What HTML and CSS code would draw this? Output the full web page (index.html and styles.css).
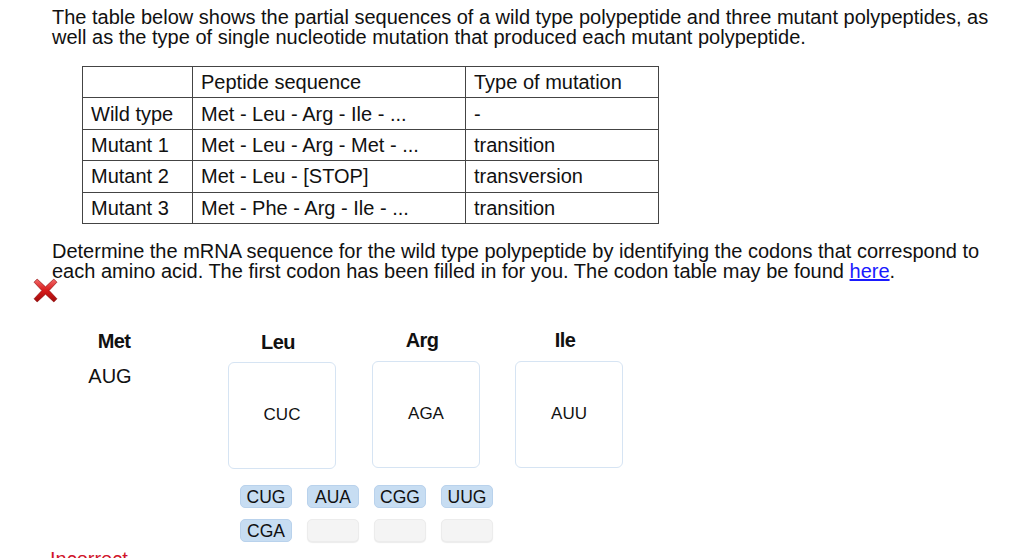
FILE: index.html
```html
<!DOCTYPE html>
<html>
<head>
<meta charset="utf-8">
<link rel="stylesheet" href="styles.css">
</head>
<body>
<div class="page">
  <p class="intro">The table below shows the partial sequences of a wild type polypeptide and three mutant polypeptides, as well as the type of single nucleotide mutation that produced each mutant polypeptide.</p>
  <table class="seq">
    <tr><td class="c1"></td><td class="c2">Peptide sequence</td><td class="c3">Type of mutation</td></tr>
    <tr><td>Wild type</td><td>Met - Leu - Arg - Ile - ...</td><td>-</td></tr>
    <tr><td>Mutant 1</td><td>Met - Leu - Arg - Met - ...</td><td>transition</td></tr>
    <tr><td>Mutant 2</td><td>Met - Leu - [STOP]</td><td>transversion</td></tr>
    <tr><td>Mutant 3</td><td>Met - Phe - Arg - Ile - ...</td><td>transition</td></tr>
  </table>
  <p class="question">Determine the mRNA sequence for the wild type polypeptide by identifying the codons that correspond to each amino acid. The first codon has been filled in for you. The codon table may be found <a href="#">here</a>.</p>
  <div class="mark">
    <svg width="25" height="25" viewBox="0 0 24 24">
      <defs>
        <linearGradient id="g" x1="0" y1="0" x2="0" y2="1">
          <stop offset="0" stop-color="#f26a6a"/>
          <stop offset="0.5" stop-color="#d81a1a"/>
          <stop offset="1" stop-color="#9e0b0b"/>
        </linearGradient>
      </defs>
      <path d="M4 1 L12 8.5 L20 1 L23 4 L15.5 12 L23 20 L20 23 L12 15.5 L4 23 L1 20 L8.5 12 L1 4 Z" fill="url(#g)" stroke="#8a0a0a" stroke-width="0.6" stroke-linejoin="round"/>
    </svg>
  </div>
  <div class="codons">
    <div class="col met">
      <div class="aa">Met</div>
      <div class="given">AUG</div>
    </div>
    <div class="col leu">
      <div class="aa">Leu</div>
      <div class="box">CUC</div>
    </div>
    <div class="col arg">
      <div class="aa">Arg</div>
      <div class="box">AGA</div>
    </div>
    <div class="col ile">
      <div class="aa">Ile</div>
      <div class="box">AUU</div>
    </div>
  </div>
  <div class="bank">
    <span class="chip">CUG</span><span class="chip">AUA</span><span class="chip">CGG</span><span class="chip">UUG</span>
    <span class="chip">CGA</span><span class="chip empty"></span><span class="chip empty"></span><span class="chip empty"></span>
  </div>
  <div class="result">Incorrect</div>
</div>
</body>
</html>
```
FILE: styles.css
```css
html, body {
  margin: 0;
  padding: 0;
  background: #ffffff;
}
body {
  font-family: "Liberation Sans", Arial, sans-serif;
  font-size: 18px;
  color: #111;
  overflow: hidden;
  height: 558px;
}
.page {
  padding: 7px 0 0 52px;
}
.intro, .question {
  margin: 0;
  width: 950px;
  font-size: 20px;
  line-height: 20px;
}
.seq {
  margin: 19px 0 0 30px;
  border-collapse: collapse;
  font-size: 20px;
}
.seq td {
  border: 1px solid #444;
  height: 30.4px;
  padding: 0 9px 0 8px;
  line-height: 22px;
  vertical-align: middle;
  box-sizing: border-box;
}
.seq tr { height: 31.4px; }
.seq .c1 { width: 110px; }
.seq .c2 { width: 273px; }
.seq .c3 { width: 193px; }
.question {
  margin-top: 17px;
}
.question a {
  color: #1a1aff;
  text-decoration: underline;
}
.mark {
  margin: -3px 0 0 -19px;
  height: 25px;
  line-height: 0;
}
.codons {
  display: flex;
  align-items: flex-start;
  margin-top: 27px;
}
.col {
  display: flex;
  flex-direction: column;
  align-items: center;
}
.aa {
  font-weight: bold;
  letter-spacing: -0.6px;
  height: 22px;
  line-height: 22px;
  font-size: 20px;
  margin-right: 8px;
}
.met {
  margin-left: 36px;
  width: 44px;
}
.met .aa { margin-left: 8px; margin-right: 0; }
.given {
  margin-top: 14px;
  line-height: 20px;
  font-size: 20px;
}
.leu { margin-left: 96px; margin-top: 1px; }
.arg { margin-left: 36px; margin-top: -1px; }
.ile { margin-left: 35px; margin-top: -1px; }
.box {
  margin-top: 10px;
  width: 106px;
  height: 105px;
  border: 1px solid #d6e4f3;
  border-radius: 6px;
  display: flex;
  align-items: center;
  justify-content: center;
  font-size: 17px;
  box-sizing: content-box;
}
.leu .box { margin-top: 9px; }
.bank {
  margin: 16px 0 0 188px;
  display: grid;
  grid-template-columns: repeat(4, 52px);
  column-gap: 15px;
  row-gap: 11px;
  width: 260px;
}
.chip {
  height: 23px;
  line-height: 22px;
  text-align: center;
  background: #c7ddf2;
  border: 1px solid #b9d2ec;
  border-radius: 5px;
  font-size: 17.5px;
  box-sizing: border-box;
}
.chip.empty {
  background: #f4f4f4;
  border-color: #ececec;
  box-shadow: 0 1px 1px rgba(0,0,0,0.08);
}
.result {
  margin: 6px 0 0 -2px;
  color: #d0142a;
  font-size: 20px;
  line-height: 22px;
}
```
